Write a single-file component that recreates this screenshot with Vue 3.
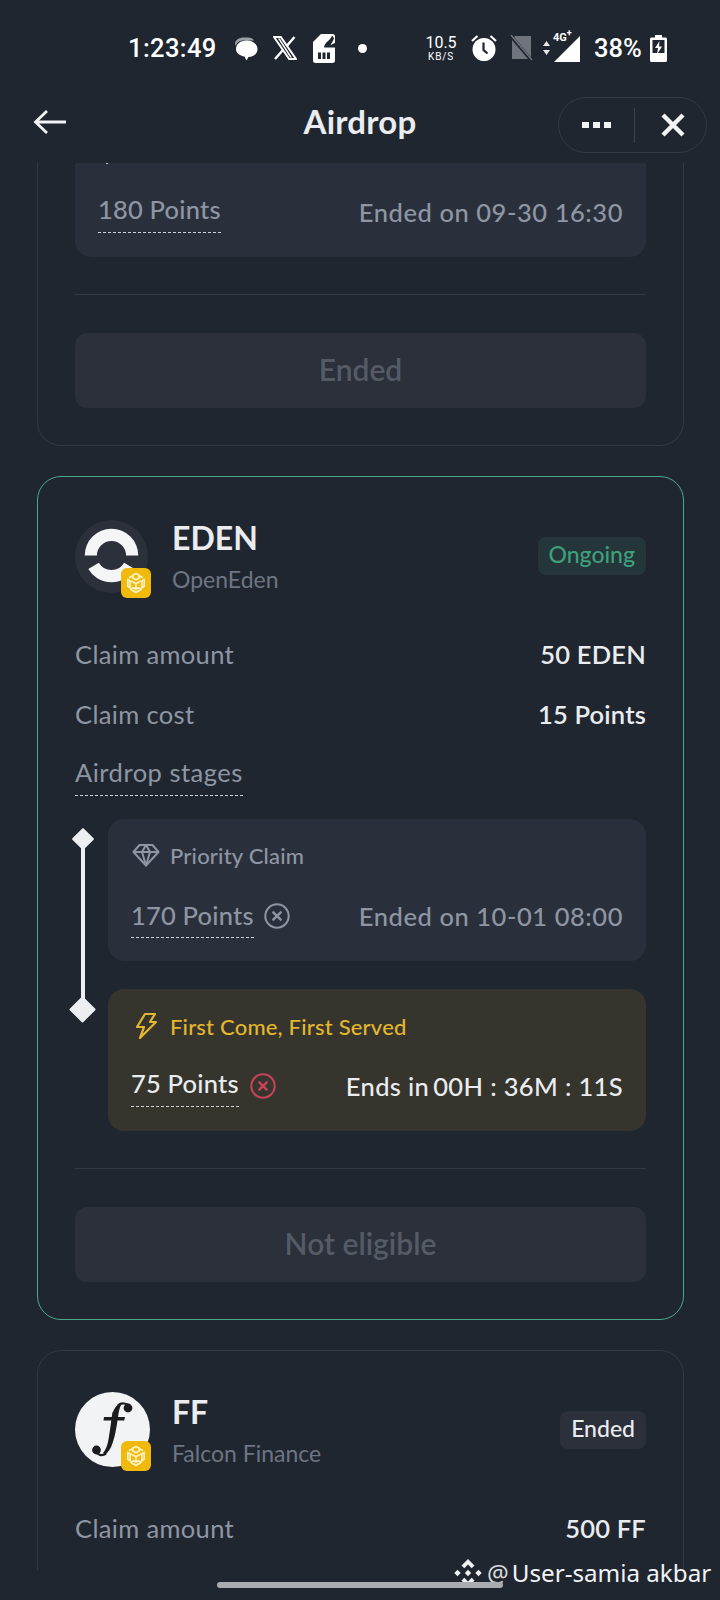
<script setup>
const stageRail = { line: 159 }
</script>

<template>
  <div class="page">
    <svg class="defs" width="0" height="0" aria-hidden="true">
      <defs>
        <symbol id="bnb" viewBox="0 0 30 30">
          <rect width="30" height="30" rx="6" fill="#f0b90b" />
          <g fill="none" stroke="#fff3c4" stroke-width="1.7" stroke-linejoin="round">
            <path d="M15 5.500l3.200 1.800v2.600L15 11.700l-3.200-1.800V7.300z" />
            <path d="M8 9.700l3.200-1.800M22 9.700l-3.200-1.800M6.800 11.500v6.800l2.400 1.400v-6.800zM23.200 11.500v6.800l-2.400 1.400v-6.800z" />
            <path d="M10.200 13l4.800 2.700 4.800-2.700M15 15.700v4.200M9.800 21.200l5.200 3.300 5.200-3.300-2.600-1.500-2.600 1.600-2.600-1.600z" />
          </g>
        </symbol>
        <symbol id="gem" viewBox="0 0 28 24">
          <g fill="none" stroke="currentColor" stroke-width="2" stroke-linejoin="round">
            <path d="M7.500 2h13L26.500 9 14 22.500 1.500 9z" />
            <path d="M1.500 9h25M10 9l4 13.500L18 9l-4-7z" />
          </g>
        </symbol>
        <symbol id="bolt" viewBox="0 0 24 28">
          <path d="M11 2h10l-5 8h6L6 26l4-11H3z" fill="none" stroke="currentColor" stroke-width="2.200" stroke-linejoin="round" />
        </symbol>
        <symbol id="cx" viewBox="0 0 26 26">
          <circle cx="13" cy="13" r="11.700" fill="none" stroke="currentColor" stroke-width="2" />
          <path d="M9.300 9.300l7.400 7.400M16.700 9.300l-7.400 7.400" fill="none" stroke="currentColor" stroke-width="2.400" stroke-linecap="round" />
        </symbol>
      </defs>
    </svg>

    <div class="status">
      <div class="status-left">
        <span class="time">1:23:49</span>
        <svg class="si-bubble" width="24" height="25" viewBox="0 0 24 25">
          <path d="M1 8c0-4 4-6.500 9-6.500h4c3 0 5 1 6 3H10C5 4.500 2 7 2 10z" fill="#9aa0a6" />
          <path d="M2 13c0-5 4.500-8.500 10.500-8.500S23.500 8 23.500 13c0 4.500-4 8-9 8l-2 3.500-2-4C5.500 19.800 2 17 2 13z" fill="#fff" />
        </svg>
        <svg class="si-x" width="24" height="24" viewBox="0 0 24 24">
          <path d="M1 1h6.800l15.200 22h-6.800z" fill="none" stroke="#fff" stroke-width="2" />
          <path d="M5 2.500h1.800l12.200 19h-1.800z" fill="#fff" />
          <path d="M21.500 1L13.400 10.400M10.200 13.700L2 23" stroke="#fff" stroke-width="2.400" />
        </svg>
        <svg class="si-sim" width="22" height="29" viewBox="0 0 22 29">
          <path d="M8 0h11.500C21 0 22 1 22 2.500v24c0 1.500-1 2.500-2.500 2.500h-17C1 29 0 28 0 26.500V8z" fill="#fff" />
          <path d="M19 1.500C17.500 7 12 7 11 13.500h11V9c-2 .5-3 1.500-4.500 2.500 1-3 3-4.500 3.500-7.500z" fill="#1f2630" />
          <path d="M5 18.500h3v6.500H5zM9.500 18.500h3v6.500h-3zM14 18.500h3v6.500h-3z" fill="#1f2630" />
        </svg>
        <span class="si-dot"></span>
      </div>
      <div class="status-right">
        <div class="speed"><span class="speed-n">10.5</span><span class="speed-u">KB/S</span></div>
        <svg class="si-alarm" width="26" height="28" viewBox="0 0 26 28">
          <path d="M1 7l5.500-5M25 7l-5.500-5" stroke="#fff" stroke-width="2.200" fill="none" />
          <circle cx="13" cy="15.500" r="11.500" fill="#fff" />
          <path d="M12.500 8.500v7.500l4 3.500" stroke="#1f2630" stroke-width="2.200" fill="none" />
        </svg>
        <svg class="si-nosim" width="24" height="26" viewBox="0 0 24 26">
          <path d="M6 1h16v23H3V5z" fill="#70757c" />
          <path d="M1 0l22 26" stroke="#1f2630" stroke-width="3.500" />
          <path d="M2 0l21 25" stroke="#70757c" stroke-width="1.500" />
        </svg>
        <div class="signal">
          <svg class="si-arrows" width="7" height="14" viewBox="0 0 7 14">
            <path d="M3.500 0L7 5H0zM3.500 14L0 9h7z" fill="#e8e8e8" />
          </svg>
          <svg class="si-tri" width="26" height="26" viewBox="0 0 26 26">
            <path d="M26 0v26H0z" fill="#fff" />
          </svg>
          <span class="net">4G<sup>+</sup></span>
        </div>
        <span class="batt-pct">38%</span>
        <svg class="si-batt" width="17" height="27" viewBox="0 0 17 27">
          <path d="M5 0h7v2.500h3.500c.8 0 1.500.7 1.500 1.500v21.500c0 .8-.7 1.500-1.500 1.500h-14C.7 27 0 26.300 0 25.500V4c0-.8.7-1.500 1.500-1.500H5z" fill="#fff" />
          <rect x="2.500" y="5" width="12" height="13" fill="#1f2630" />
          <path d="M9.500 6L5 13h3l-1 6.500 5-8H9z" fill="#fff" />
        </svg>
      </div>
    </div>

    <header class="nav">
      <svg class="back" width="34" height="26" viewBox="0 0 34 26">
        <path d="M33 13H3M14 2L2.500 13 14 24" fill="none" stroke="#f2f3f5" stroke-width="2.800" />
      </svg>
      <h1 class="title">Airdrop</h1>
      <div class="capsule">
        <span class="dots"><i></i><i></i><i></i></span>
        <span class="cap-sep"></span>
        <svg class="close" width="24" height="24" viewBox="0 0 24 24">
          <path d="M2 2l20 20M22 2L2 22" stroke="#f2f3f5" stroke-width="4.400" />
        </svg>
      </div>
    </header>

    <main class="list">
      <section class="card card-tail">
        <div class="stage stage-grey stage-first">
          <div class="stage-title">
            <svg class="st-icon st-bolt"><use href="#bolt" /></svg>
            <span>First Come, First Served</span>
          </div>
          <div class="stage-row">
            <span class="pts">180 Points</span>
            <span class="when">Ended on 09-30 16:30</span>
          </div>
        </div>
        <div class="divider"></div>
        <div class="btn">Ended</div>
      </section>

      <section class="card card-active">
        <div class="head">
          <div class="logo logo-eden">
            <svg width="73" height="73" viewBox="0 0 75 75">
              <circle cx="37.500" cy="37.500" r="37.500" fill="#2b303a" />
              <path d="M10 36.500a27.500 27.500 0 0 1 55 0H52.500a15 15 0 0 0-30 0z" fill="#f4f5f6" />
              <path d="M19.100 47.100a21.250 21.250 0 0 0 36.800 0" fill="none" stroke="#f4f5f6" stroke-width="12.500" />
            </svg>
            <svg class="badge"><use href="#bnb" /></svg>
          </div>
          <div class="names">
            <div class="sym">EDEN</div>
            <div class="sub">OpenEden</div>
          </div>
          <span class="pill pill-on">Ongoing</span>
        </div>

        <div class="row"><span class="k">Claim amount</span><span class="v">50 EDEN</span></div>
        <div class="row"><span class="k">Claim cost</span><span class="v">15 Points</span></div>
        <div class="row"><span class="k dashed">Airdrop stages</span></div>

        <div class="stages">
          <div class="rail">
            <span class="dia dia-s"></span>
            <span class="rail-line" :style="{ height: stageRail.line + 'px' }"></span>
            <span class="dia dia-l"></span>
          </div>
          <div class="stage-col">
            <div class="stage stage-grey">
              <div class="stage-title">
                <svg class="st-icon"><use href="#gem" /></svg>
                <span>Priority Claim</span>
              </div>
              <div class="stage-row">
                <span class="pts-wrap">
                  <span class="pts">170 Points</span>
                  <svg class="cx"><use href="#cx" /></svg>
                </span>
                <span class="when">Ended on 10-01 08:00</span>
              </div>
            </div>
            <div class="stage stage-gold">
              <div class="stage-title">
                <svg class="st-icon st-bolt"><use href="#bolt" /></svg>
                <span>First Come, First Served</span>
              </div>
              <div class="stage-row">
                <span class="pts-wrap">
                  <span class="pts">75 Points</span>
                  <svg class="cx"><use href="#cx" /></svg>
                </span>
                <span class="when"><span class="ends">Ends in</span>00H : 36M : 11S</span>
              </div>
            </div>
          </div>
        </div>

        <div class="divider"></div>
        <div class="btn">Not eligible</div>
      </section>

      <section class="card">
        <div class="head">
          <div class="logo logo-ff">
            <svg width="75" height="75" viewBox="0 0 75 75">
              <circle cx="37.500" cy="37.500" r="37.500" fill="#f2f3f5" />
              <g fill="#1a1c20">
                <circle cx="53" cy="16" r="4.400" />
                <circle cx="21.500" cy="58" r="4.400" />
                <path d="M29 25h21l-.8 3.500H28.500z" />
                <path d="M38 20c1-3 3-6 5-7.500L46 13c-1.500 3-2.300 7-3 12-1.300 9-3 21-6.500 29-1.500 3.500-3.500 6-5.500 8l-3-1c2.500-3 4-6.500 5-11 1.500-7.500 3-20 4.500-30z" />
              </g>
              <path d="M56 15.500C52 10.500 46 10.500 43 13.500M31 61.500C27 64.500 22.500 63 20 59" fill="none" stroke="#1a1c20" stroke-width="2.200" />
            </svg>
            <svg class="badge"><use href="#bnb" /></svg>
          </div>
          <div class="names">
            <div class="sym">FF</div>
            <div class="sub">Falcon Finance</div>
          </div>
          <span class="pill pill-off">Ended</span>
        </div>
        <div class="row"><span class="k">Claim amount</span><span class="v">500 FF</span></div>
      </section>
    </main>

    <div class="watermark">
      <svg width="28" height="28" viewBox="0 0 28 28">
        <g fill="#eef0f2">
          <path d="M14 0l6.500 6.500-2.800 2.800L14 5.600l-3.700 3.700-2.800-2.800zM14 28l-6.500-6.500 2.800-2.800 3.700 3.700 3.700-3.700 2.800 2.800z" />
          <path d="M3.500 10.800L6.700 14l-3.200 3.200L.3 14zM24.500 10.800l3.200 3.200-3.200 3.200-3.200-3.200zM14 10.800l3.200 3.200-3.200 3.200-3.200-3.200z" />
        </g>
      </svg>
      <span class="wm-at">@</span>
      <span>User-samia akbar</span>
    </div>
    <div class="home"></div>
  </div>
</template>

<style>
html, body { margin: 0; background: #1f2630; }
</style>

<style scoped>
.page {
  position: relative;
  width: 720px;
  height: 1600px;
  overflow: hidden;
  background: #1f2630;
  color: #eaecef;
  font-family: Lato, "Noto Sans", sans-serif;
  display: flex;
  flex-direction: column;
}
.defs { position: absolute; }

.status {
  height: 96px;
  flex: none;
  display: flex;
  justify-content: space-between;
  align-items: center;
  font-family: Roboto, sans-serif;
  color: #fff;
}
.status-left { display: flex; align-items: center; padding-left: 128px; }
.time { font-size: 25.5px; font-weight: 500; width: 88px; letter-spacing: 0.4px; white-space: nowrap; }
.si-bubble { margin-left: 18px; }
.si-x { margin-left: 15px; }
.si-sim { margin-left: 16px; }
.si-dot { width: 9px; height: 9px; border-radius: 50%; background: #fff; margin-left: 23px; }
.status-right { display: flex; align-items: center; padding-right: 53px; }
.speed { display: flex; flex-direction: column; align-items: center; width: 30px; line-height: 1; }
.speed-n { font-size: 16px; }
.speed-u { font-size: 10px; letter-spacing: 0.8px; margin-top: 1px; }
.si-alarm { margin-left: 15px; }
.si-nosim { margin-left: 12px; }
.signal { position: relative; display: flex; align-items: center; margin-left: 10px; width: 37px; height: 28px; gap: 4px; }
.si-tri { margin-top: 1px; }
.net {
  position: absolute;
  left: 10px;
  top: -3px;
  font-size: 11px;
  font-weight: 700;
  line-height: 13px;
}
.net sup { font-size: 9px; line-height: 0; }
.batt-pct { font-size: 25.5px; font-weight: 500; margin-left: 14px; width: 48px; white-space: nowrap; }
.si-batt { margin-left: 8px; }

.nav {
  height: 67px;
  flex: none;
  display: grid;
  grid-template-columns: 1fr auto 1fr;
  align-items: start;
  position: relative;
}
.back { margin: 13px 0 0 33px; }
.title { margin: 5px 0 0; font-size: 33px; line-height: 40px; font-weight: 700; color: #eaecef; letter-spacing: 0.2px; }
.capsule {
  justify-self: end;
  margin: 1px 13px 0 0;
  width: 149px;
  height: 56px;
  box-sizing: border-box;
  border: 1px solid #333a45;
  border-radius: 28px;
  display: flex;
  align-items: center;
}
.dots { display: flex; gap: 4px; margin-left: 23px; }
.dots i { width: 7px; height: 6px; background: #f2f3f5; }
.cap-sep { width: 1px; height: 35px; background: #3a414c; margin-left: 23px; }
.close { margin-left: 26px; }

.list {
  flex: none;
  height: 1407px;
  overflow: hidden;
  display: flex;
  flex-direction: column;
  gap: 30px;
}
.card {
  flex: none;
  margin: 0 36px 0 37px;
  box-sizing: border-box;
  padding: 37px;
  border: 1px solid #323944;
  border-radius: 24px;
}
.card-tail { border-top: none; border-top-left-radius: 0; border-top-right-radius: 0; padding-top: 0; }
.card-active { border-color: #4ba88c; }

.stage-first { margin-top: -48px; }
.stage {
  box-sizing: border-box;
  height: 142px;
  border-radius: 16px;
  padding: 24px 23px 0 23px;
}
.stage-grey { background: #2a303b; color: #8f96a3; }
.stage-gold { background: #36352d; color: #eaecef; }
.stage-title {
  display: flex;
  align-items: center;
  gap: 10px;
  height: 28px;
  margin-left: 1px;
  font-size: 22px;
  letter-spacing: 0.2px;
  font-weight: 500;
  position: relative;
  top: -1px;
}
.stage-grey .stage-title { top: -2px; }
.stage-gold .stage-title { color: #e3b62f; }
.st-icon { width: 28px; height: 24px; color: #8f96a3; }
.st-bolt { height: 28px; color: #e3b62f; }
.stage-first .st-bolt { color: #c9ccd2; }
.stage-row {
  display: flex;
  justify-content: space-between;
  align-items: flex-start;
  margin-top: 28px;
  font-size: 25.5px;
}
.pts-wrap { display: flex; align-items: flex-start; gap: 10px; }
.pts {
  font-weight: 500;
  line-height: 35px;
  margin-top: -1px;
  padding-bottom: 4px;
  letter-spacing: 0.2px;
  border-bottom: 1px dashed #cfd2d8;
}
.stage-first .pts { margin-top: -3px; padding-bottom: 5px; }
.stage-gold .pts { margin-top: -3px; padding-bottom: 5px; }
.stage-gold .pts-wrap { gap: 11px; }
.cx { width: 26px; height: 26px; margin-top: 4px; }
.stage-gold .cx { color: #c9425a; }
.when { line-height: 35px; font-weight: 500; letter-spacing: 0.55px; }
.stage-gold .when { letter-spacing: 0.35px; }
.ends { margin-right: 4px; }

.divider { height: 1px; background: #323944; margin-top: 37px; }
.btn {
  margin-top: 38px;
  height: 75px;
  box-sizing: border-box;
  padding-bottom: 3px;
  border-radius: 12px;
  background: #2b303a;
  color: #555b66;
  display: flex;
  align-items: center;
  justify-content: center;
  font-size: 30px;
  font-weight: 600;
}

.head { display: flex; align-items: flex-start; height: 110px; position: relative; }
.logo { position: relative; width: 75px; height: 75px; flex: none; border-radius: 50%; margin-top: 4px; }
.logo svg:first-child { display: block; }
.logo-eden { margin-top: 6px; height: 73px; }
.logo-eden .badge { top: 48px; }
.badge { position: absolute; left: 46px; top: 49px; width: 30px; height: 30px; }
.names { margin-left: 22px; flex: 1; }
.sym { font-size: 32px; line-height: 38px; font-weight: 700; color: #eaecef; margin-top: 5px; }
.sub { font-size: 23px; line-height: 30px; color: #6e7582; margin-top: 7px; }
.pill {
  box-sizing: border-box;
  height: 38px;
  padding: 0 11px;
  border-radius: 8px;
  font-size: 23px;
  line-height: 35px;
  margin-top: 23px;
  font-weight: 500;
}
.pill-on { background: #243639; color: #3f9f7c; }
.pill-off { background: #2b303a; color: #eaecef; }

.row {
  display: flex;
  justify-content: space-between;
  align-items: center;
  height: 60px;
  font-size: 25.5px;
}
.k { color: #8f96a3; line-height: 35px; letter-spacing: 0.35px; }
.v { color: #eaecef; font-weight: 600; letter-spacing: 0.2px; }
.dashed { border-bottom: 1px dashed #cfd2d8; padding-bottom: 5px; margin-top: 3px; letter-spacing: 0.5px; }

.stages { display: flex; margin-top: 15px; }
.rail {
  width: 33px;
  flex: none;
  display: flex;
  flex-direction: column;
  align-items: center;
  padding-top: 12px;
  margin-left: -9px;
  margin-right: 9px;
}
.dia { flex: none; background: #eceef1; transform: rotate(45deg); border-radius: 1px; }
.dia-s { width: 16px; height: 16px; }
.dia-l { width: 19px; height: 19px; margin-top: -3px; }
.rail-line { width: 4px; background: #eceef1; margin-top: -3px; }
.stage-col { flex: 1; display: flex; flex-direction: column; gap: 28px; }

.watermark {
  position: absolute;
  left: 454px;
  top: 1556px;
  display: flex;
  align-items: center;
  font-family: "Noto Sans", sans-serif;
  font-size: 24.2px;
  color: #f2f3f5;
  white-space: nowrap;
}
.wm-at { margin: 0 3px 0 5px; color: #d8dadd; }
.home {
  position: absolute;
  left: 217px;
  top: 1582px;
  width: 286px;
  height: 6px;
  border-radius: 3px;
  background: #a9acb0;
}
</style>
